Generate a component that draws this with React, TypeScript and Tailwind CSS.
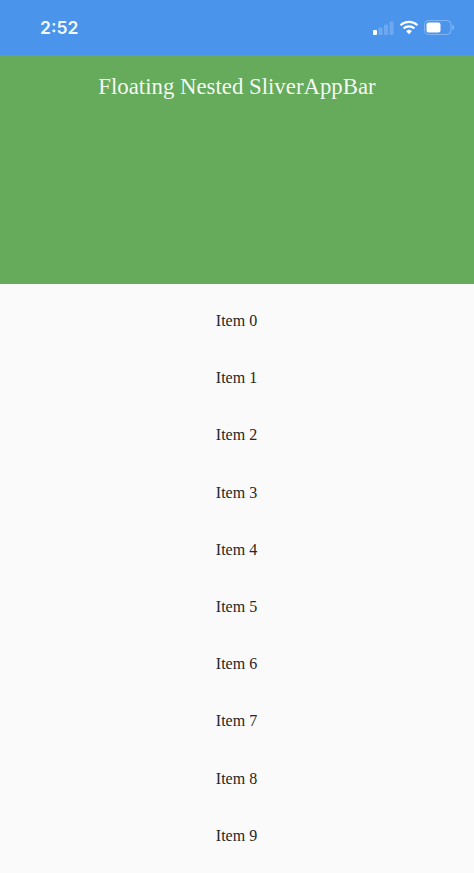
const ITEMS = Array.from({ length: 10 }, (_, i) => `Item ${i}`)

function StatusIcons() {
  return (
    <div className="flex items-center gap-[5px]">
      <svg width="21" height="14" viewBox="0 0 21 14" aria-hidden="true">
        <rect x="0" y="9" width="4" height="5" rx="1" fill="#ffffff" />
        <rect x="5.5" y="6.5" width="4" height="7.5" rx="1" fill="#ffffff" opacity="0.2" />
        <rect x="11" y="3.5" width="4" height="10.5" rx="1" fill="#ffffff" opacity="0.2" />
        <rect x="16.5" y="0.5" width="4" height="13.5" rx="1" fill="#ffffff" opacity="0.2" />
      </svg>
      <svg width="20" height="15" viewBox="0 0 20 15" aria-hidden="true">
        <path d="M1.5 5.2 A12.5 12.5 0 0 1 18.5 5.2" fill="none" stroke="#ffffff" strokeWidth="2.2" />
        <path d="M4.6 8.4 A8 8 0 0 1 15.4 8.4" fill="none" stroke="#ffffff" strokeWidth="2.2" />
        <path d="M7.2 11.2 A4 4 0 0 1 12.8 11.2 L10 14.2 Z" fill="#ffffff" />
      </svg>
      <svg width="31" height="15" viewBox="0 0 31 15" aria-hidden="true">
        <rect x="0.5" y="0.5" width="26.5" height="14" rx="4" fill="none" stroke="#ffffff" strokeOpacity="0.3" />
        <rect x="2.5" y="2.5" width="14" height="10" rx="2" fill="#ffffff" />
        <path d="M28.4 5 C29.6 5.4 30.2 6.4 30.2 7.5 C30.2 8.6 29.6 9.6 28.4 10 Z" fill="#ffffff" opacity="0.35" />
      </svg>
    </div>
  )
}

export default function App() {
  return (
    <div className="h-[873px] overflow-hidden bg-[#fafafa] font-['Liberation_Serif',serif]">
      <header className="flex h-[55px] items-center justify-between bg-[#4a94ec] pl-[40px] pr-[19px]">
        <span className="pt-[2px] font-['Inter',sans-serif] text-[17.5px] font-semibold text-white/95">2:52</span>
        <StatusIcons />
      </header>
      <div className="h-[229px] bg-[#66ab5b] pt-[17px] text-center text-[22.8px] leading-[30px] text-white/95">
        Floating Nested SliverAppBar
      </div>
      <ul className="pt-[8.5px] pr-[1px]">
        {ITEMS.map((item) => (
          <li
            key={item}
            className="flex h-[57.2px] items-center justify-center text-[16px] text-[#262626]"
          >
            {item}
          </li>
        ))}
      </ul>
    </div>
  )
}
